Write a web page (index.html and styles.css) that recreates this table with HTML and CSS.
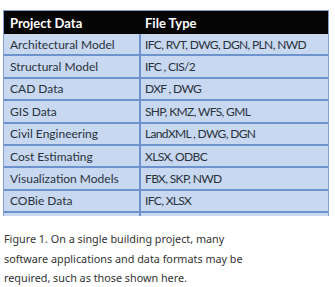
FILE: index.html
```html
<!DOCTYPE html>
<html>
<head>
<meta charset="utf-8">
<link rel="stylesheet" href="styles.css">
</head>
<body>
<div class="figure">
  <div class="table">
    <div class="row head">
      <div class="cell c1">Project Data</div>
      <div class="cell c2">File Type</div>
    </div>
    <div class="row">
      <div class="cell c1">Architectural Model</div>
      <div class="cell c2">IFC, RVT, DWG, DGN, PLN, NWD</div>
    </div>
    <div class="row">
      <div class="cell c1">Structural Model</div>
      <div class="cell c2">IFC , CIS/2</div>
    </div>
    <div class="row">
      <div class="cell c1">CAD Data</div>
      <div class="cell c2">DXF , DWG</div>
    </div>
    <div class="row">
      <div class="cell c1">GIS Data</div>
      <div class="cell c2">SHP, KMZ, WFS, GML</div>
    </div>
    <div class="row">
      <div class="cell c1">Civil Engineering</div>
      <div class="cell c2">LandXML , DWG, DGN</div>
    </div>
    <div class="row">
      <div class="cell c1">Cost Estimating</div>
      <div class="cell c2">XLSX, ODBC</div>
    </div>
    <div class="row">
      <div class="cell c1">Visualization Models</div>
      <div class="cell c2">FBX, SKP, NWD</div>
    </div>
    <div class="row">
      <div class="cell c1">COBie Data</div>
      <div class="cell c2">IFC, XLSX</div>
    </div>
    <div class="row stub">
      <div class="cell c1"></div>
      <div class="cell c2"></div>
    </div>
  </div>
  <p class="caption">Figure 1. On a single building project, many<br>software applications and data formats may be<br>required, such as those shown here.</p>
</div>
</body>
</html>
```

FILE: styles.css
```css
html, body {
  margin: 0;
  padding: 0;
  background: #ffffff;
}

.figure {
  padding-top: 10px;
}

.table {
  margin-left: 3px;
  width: 326px;
  border: 1px solid #7f9fd0;
  border-bottom: none;
  box-sizing: border-box;
  font-family: Lato, "Liberation Sans", sans-serif;
  font-size: 12px;
  letter-spacing: 0;
  color: #2b323c;
  background: #c7d8f0;
}

.row {
  display: grid;
  grid-template-columns: 135px 1fr;
  height: 22.4px;
  border-bottom: 2px solid #6d93cc;
  box-sizing: border-box;
}

.row.head {
  height: 23px;
  background: #050505;
  color: #ffffff;
  font-weight: bold;
  font-size: 13px;
  border-bottom: none;
}

.row.stub {
  height: 3px;
  border-bottom: none;
}

.cell {
  display: flex;
  align-items: center;
  padding-left: 6px;
  white-space: nowrap;
  overflow: hidden;
}

.cell.c2 {
  border-left: 2px solid #6d93cc;
  padding-left: 4px;
  letter-spacing: -0.65px;
}

.head .cell.c2 {
  border-left: 2px solid #050505;
  letter-spacing: 0;
}

.caption {
  margin: 13px 0 0 4px;
  font-family: "Noto Sans", "Open Sans", sans-serif;
  font-size: 10.8px;
  line-height: 19.5px;
  color: #333333;
}
```
